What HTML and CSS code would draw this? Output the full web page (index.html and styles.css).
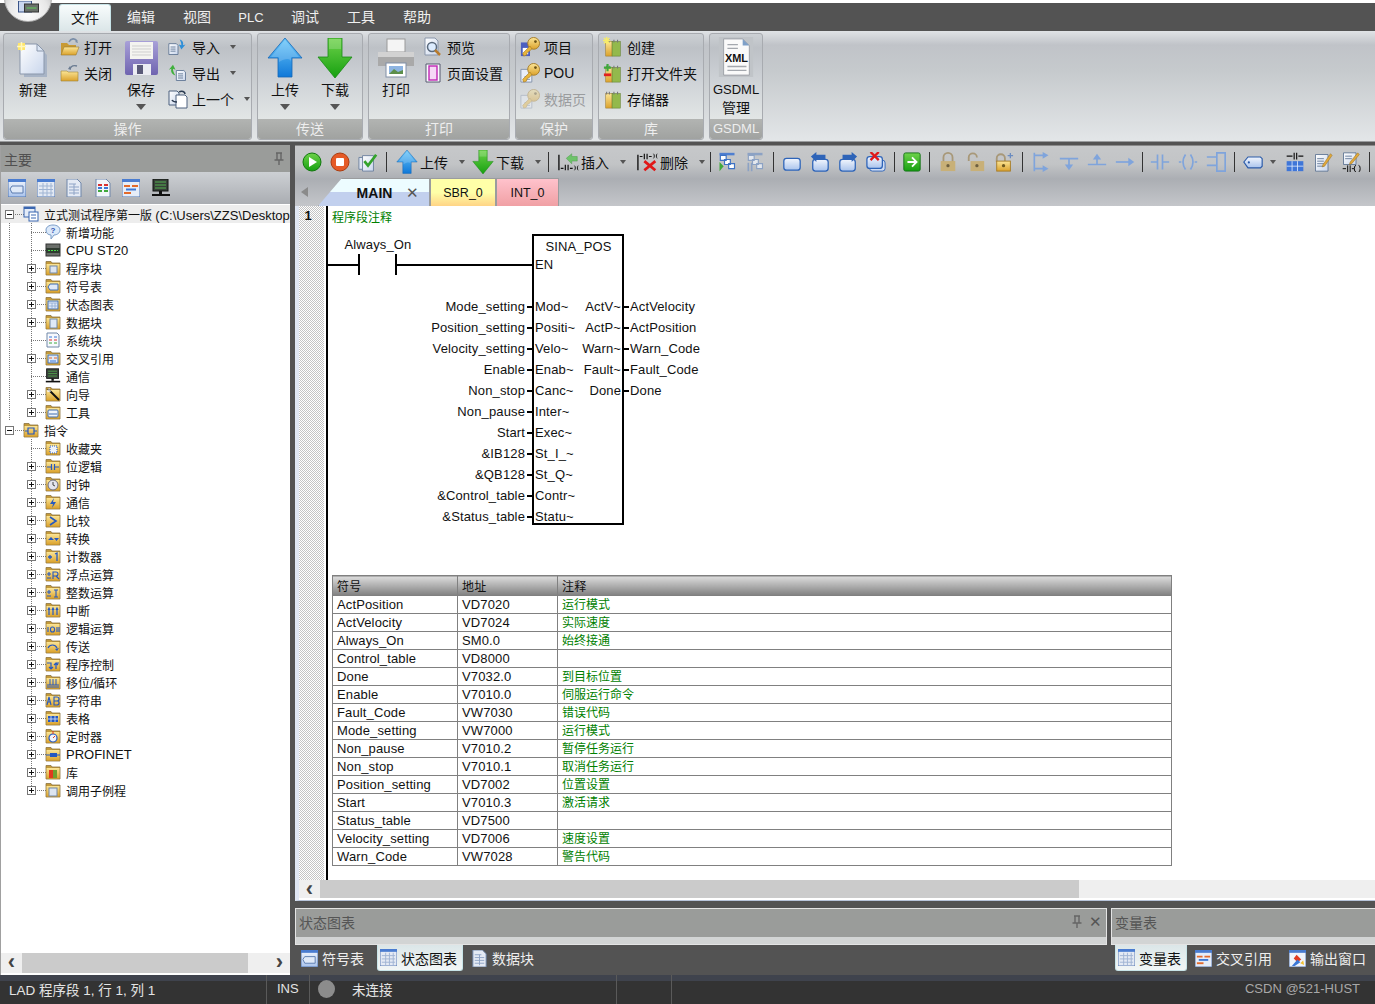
FILE: index.html
```html
<!DOCTYPE html>
<html lang="zh">
<head>
<meta charset="UTF-8">
<title>STEP 7-MicroWIN SMART</title>
<link rel="stylesheet" href="styles.css">
</head>
<body>
<svg class="defs" xmlns="http://www.w3.org/2000/svg">
  <defs>
    <linearGradient id="gBlue" x1="0" y1="0" x2="0" y2="1"><stop offset="0" stop-color="#6cc8fa"/><stop offset="1" stop-color="#0f78d8"/></linearGradient>
    <linearGradient id="gGreen" x1="0" y1="0" x2="0" y2="1"><stop offset="0" stop-color="#6ed24a"/><stop offset="1" stop-color="#16a010"/></linearGradient>
    <linearGradient id="gGold" x1="0" y1="0" x2="0" y2="1"><stop offset="0" stop-color="#fbe596"/><stop offset="1" stop-color="#dba22c"/></linearGradient>
    <linearGradient id="gPage" x1="0" y1="0" x2="1" y2="1"><stop offset="0" stop-color="#ffffff"/><stop offset="1" stop-color="#c9d6ec"/></linearGradient>
    <linearGradient id="gWin" x1="0" y1="0" x2="0" y2="1"><stop offset="0" stop-color="#f2f6fd"/><stop offset="1" stop-color="#a9c3ec"/></linearGradient>
    <linearGradient id="gPurple" x1="0" y1="0" x2="0" y2="1"><stop offset="0" stop-color="#a8a0d8"/><stop offset="1" stop-color="#6f64b0"/></linearGradient>

    <symbol id="fo" viewBox="0 0 16 16"><path d="M1 3V1.500h5L7 3h8v12H1z" fill="#c49a3a" stroke="#8d7440" stroke-width=".8"/><rect x="1.500" y="4" width="13" height="10.500" fill="url(#gGold)"/></symbol>
    <symbol id="new" viewBox="0 0 32 36"><path d="M7 6h16l7 7v22H7z" fill="#a8b4c6"/><path d="M3 2h17l7 7v23H3z" fill="url(#gPage)" stroke="#8a97ab"/><path d="M20 2v7h7z" fill="#dbe5f4" stroke="#8a97ab"/><path d="M1 1h7v7H1z" fill="#ffe66a"/><path d="M4.500 0v9M0 4.500h9" stroke="#fff8c0" stroke-width="1.500"/></symbol>
    <symbol id="open" viewBox="0 0 20 20"><path d="M1 6h6l2 2h7v10H1z" fill="#c89a34"/><path d="M1 18l3-8h15l-3 8z" fill="url(#gGold)" stroke="#9a7a30" stroke-width=".6"/><path d="M9 5c2-4 6-4 8-1" fill="none" stroke="#7a8ea8" stroke-width="1.600"/><path d="M18 6l-3-1 2-2z" fill="#7a8ea8"/></symbol>
    <symbol id="close" viewBox="0 0 20 20"><path d="M1 8h6l1 1h10v9H1z" fill="url(#gGold)" stroke="#a08436" stroke-width=".6"/><path d="M10 6c1-3 4-4 7-3" fill="none" stroke="#6b7c92" stroke-width="1.400"/><path d="M11 7l-3-1 2-3z" fill="#6b7c92"/></symbol>
    <symbol id="save" viewBox="0 0 33 34"><rect x="0" y="0" width="33" height="34" rx="2" fill="url(#gPurple)"/><rect x="5" y="1" width="23" height="17" fill="#f4f4f0"/><path d="M7 5h19M7 8h19M7 11h19M7 14h19" stroke="#cfcfcf"/><rect x="8" y="23" width="18" height="11" fill="#ecedf3"/><rect x="12" y="24" width="6" height="9" fill="#5a5a78"/></symbol>
    <symbol id="imp" viewBox="0 0 24 20"><path d="M1 6h9l2 2v11H1z" fill="url(#gPage)" stroke="#59708f"/><path d="M3 10h6M3 12.500h6M3 15h6" stroke="#59708f"/><path d="M14 1c3 1 5 3 4 7l3-1-5 6-3-6 3 1c0-3-1-5-2-7z" fill="#2e8fd8"/></symbol>
    <symbol id="exp" viewBox="0 0 24 20"><path d="M10 7h9l2 2v10H10z" fill="url(#gPage)" stroke="#59708f"/><path d="M12 11h6M12 13.500h6M12 16h6" stroke="#59708f"/><path d="M9 13C5 12 3 9 4 5L1 6l5-6 3 6-3-1c0 3 1 5 3 8z" fill="#3fb03c"/></symbol>
    <symbol id="prev" viewBox="0 0 20 20"><path d="M1 2h8l2 2v12H1z" fill="url(#gPage)" stroke="#4d617e"/><path d="M8 6h9l2 2v11H8z" fill="#fff" stroke="#4d617e"/><path d="M11 3c3-2 6 0 6 2M9 13c-2 0-4 0-5-2" fill="none" stroke="#29394f" stroke-width="1.500"/></symbol>
    <symbol id="aup" viewBox="0 0 34 40"><path d="M17 0l17 20H24v19H10V20H0z" fill="url(#gBlue)" stroke="#1467b8" stroke-width=".8"/><path d="M17 2L3 19h8v5c6-4 12-4 12 0v-5h8z" fill="#fff" opacity=".18"/></symbol>
    <symbol id="adn" viewBox="0 0 34 40"><path d="M10 0h14v19h10L17 40 0 19h10z" fill="url(#gGreen)" stroke="#188a14" stroke-width=".8"/><path d="M11 1h12v10H11z" fill="#fff" opacity=".18"/></symbol>
    <symbol id="print" viewBox="0 0 36 38"><rect x="9" y="0" width="18" height="13" fill="#f4f4f4" stroke="#9a9a9a"/><path d="M0 13h36v14H0z" fill="#a9a9a9"/><path d="M0 13h36v5H0z" fill="#d2d2d2"/><rect x="8" y="24" width="20" height="14" fill="#fff" stroke="#8090a8"/><rect x="11" y="27" width="14" height="8" fill="#8db4e2"/><path d="M11 35l5-5 4 3 5-2v4z" fill="#5d8f4b"/></symbol>
    <symbol id="pview" viewBox="0 0 20 20"><path d="M2 1h10l3 3v14H2z" fill="url(#gPage)" stroke="#8a97ab"/><circle cx="9" cy="10" r="4.500" fill="#dcecff" stroke="#5a6a7d" stroke-width="1.500"/><path d="M12 13l5 5" stroke="#b77b2e" stroke-width="2.500"/></symbol>
    <symbol id="page" viewBox="0 0 20 20"><path d="M3 1h14v18H3z" fill="#fbfbff" stroke="#55586e"/><rect x="6" y="3" width="8" height="14" fill="#f6d9f6" stroke="#c026b4" stroke-width="1.400"/></symbol>
    <symbol id="key" viewBox="0 0 22 22"><path d="M1 6h10v15H1z" fill="#4c5fc0"/><path d="M3 12h6v7H3z" fill="#fff"/><circle cx="15" cy="7" r="6.500" fill="url(#gGold)" stroke="#a57a24"/><circle cx="17" cy="5" r="1.500" fill="#6b5214"/><path d="M11 10l-8 8 1 3 3-1 1-3 2-1 3-3z" fill="#e8b53c" stroke="#a57a24" stroke-width=".7"/></symbol>
    <symbol id="keyp" viewBox="0 0 22 22"><path d="M1 7h12v14H1z" fill="#e9eef8" stroke="#8090a8"/><path d="M5 15h6M5 18h6" stroke="#8090a8"/><circle cx="15" cy="7" r="6.500" fill="url(#gGold)" stroke="#a57a24"/><circle cx="17" cy="5" r="1.500" fill="#6b5214"/><path d="M11 10l-8 8 1 3 3-1 1-3 2-1 3-3z" fill="#e8b53c" stroke="#a57a24" stroke-width=".7"/></symbol>
    <symbol id="lib" viewBox="0 0 22 22"><rect x="3" y="5" width="7" height="16" fill="url(#gGold)" stroke="#9a7a30" stroke-width=".6"/><rect x="10" y="5" width="9" height="16" fill="#93b94c" stroke="#627f2c" stroke-width=".6"/><path d="M4 3v3M7 3v3M12 3v3M16 3v3" stroke="#777" stroke-width="1.200"/></symbol>
    <symbol id="star" viewBox="0 0 22 22"><path d="M4 0v8M0 4h8M1 1l6 6M7 1L1 7" stroke="#f7ec6a" stroke-width="1.500"/></symbol>
    <symbol id="xml" viewBox="0 0 36 42"><rect x="0" y="0" width="36" height="42" fill="#c0c4c8"/><path d="M5 2h20l7 7v31H5z" fill="#fafafa" stroke="#9ca0a6"/><path d="M25 2v7h7z" fill="#7ea0c8"/><path d="M9 8h11M9 12h11M9 31h20M9 35h20" stroke="#a4a8ae" stroke-width="1.400"/><text x="18.500" y="26" text-anchor="middle" class="xml-text">XML</text></symbol>

    <symbol id="play" viewBox="0 0 20 20"><circle cx="10" cy="10" r="9" fill="url(#gGreen)" stroke="#11780e"/><path d="M7 5l8 5-8 5z" fill="#fff"/></symbol>
    <symbol id="stop" viewBox="0 0 20 20"><circle cx="10" cy="10" r="9" fill="#e55a26" stroke="#ab3c10"/><rect x="6" y="6" width="8" height="8" rx="1" fill="#fff"/></symbol>
    <symbol id="chk" viewBox="0 0 22 22"><path d="M1 6h8v13H1z" fill="#dfe6f2" stroke="#6a7f9e"/><path d="M5 4h12v17H5z" fill="url(#gPage)" stroke="#6a7f9e"/><path d="M7 10l4 5 9-12" fill="none" stroke="#34a32c" stroke-width="3"/></symbol>
    <symbol id="ins" viewBox="0 0 24 20"><path d="M1 2v17" stroke="#111" stroke-width="1.500"/><path d="M3 17h3M8 13v6M11 13v6M13 17h3" stroke="#111" stroke-width="1.300"/><path d="M18 14a2 3 0 0 1 0 5M22 14a2 3 0 0 0 0 5" stroke="#111" fill="none"/><path d="M9 6l6-5v3h6v5h-6v3z" fill="#6ec36a" stroke="#4a9a48" stroke-width=".5"/></symbol>
    <symbol id="del" viewBox="0 0 24 20"><path d="M1 2v17" stroke="#111" stroke-width="1.500"/><path d="M3 4h3M8 1v6M11 1v6M13 4h3" stroke="#111" stroke-width="1.300"/><path d="M18 1a2 3 0 0 1 0 5M22 1a2 3 0 0 0 0 5" stroke="#111" fill="none"/><path d="M8 9l12 10M20 9L8 19" stroke="#e01818" stroke-width="3"/></symbol>
    <symbol id="nest" viewBox="0 0 20 24"><rect x="1" y="1" width="18" height="3" fill="#4f7fd0"/><path d="M2 4h7v6H2zM7 9h7v6H7zM12 14h7v6h-7z" fill="#fff" stroke="#3d72c4" stroke-width="1.400"/><path d="M1 12l5 5-5 6z" fill="#41a83a"/></symbol>
    <symbol id="nest2" viewBox="0 0 20 24"><rect x="1" y="1" width="18" height="3" fill="#8ca2c4"/><path d="M2 4h7v6H2zM7 9h7v6H7zM12 14h7v6h-7z" fill="#e4e8ee" stroke="#8ca2c4" stroke-width="1.400"/><path d="M1 13h2v10H1zM5 13h2v10H5z" fill="#8ca2c4"/></symbol>
    <symbol id="rc" viewBox="0 0 22 22"><rect x="2" y="7" width="18" height="13" rx="3" fill="url(#gWin)" stroke="#2e64b8" stroke-width="1.400"/></symbol>
    <symbol id="rcl" viewBox="0 0 22 22"><rect x="3" y="8" width="17" height="13" rx="3" fill="url(#gWin)" stroke="#2e64b8" stroke-width="1.400"/><path d="M1 5l6-5v3h10v5H7v3z" fill="#2e64b8"/></symbol>
    <symbol id="rcr" viewBox="0 0 22 22"><rect x="2" y="8" width="17" height="13" rx="3" fill="url(#gWin)" stroke="#2e64b8" stroke-width="1.400"/><path d="M21 5l-6-5v3H5v5h10v3z" fill="#2e64b8"/></symbol>
    <symbol id="rcx" viewBox="0 0 22 22"><rect x="4" y="9" width="17" height="12" rx="3" fill="#cfdcf2" stroke="#2e64b8"/><rect x="1" y="5" width="17" height="13" rx="3" fill="url(#gWin)" stroke="#2e64b8" stroke-width="1.400"/><path d="M5 0l9 9M14 0L5 9" stroke="#e01818" stroke-width="2.600"/></symbol>
    <symbol id="go" viewBox="0 0 20 22"><rect x="1" y="1" width="18" height="20" rx="2" fill="url(#gGreen)" stroke="#0e6f12"/><path d="M5 11h9M10 6l5 5-5 5" fill="none" stroke="#fff" stroke-width="2"/></symbol>
    <symbol id="lock" viewBox="0 0 20 22"><path d="M5 11V6a5 5 0 0 1 10 0v5" fill="none" stroke="#a89878" stroke-width="2"/><rect x="2" y="10" width="16" height="11" fill="#c8b078"/><circle cx="10" cy="15" r="1.800" fill="#6e6040"/></symbol>
    <symbol id="ulock" viewBox="0 0 20 22"><path d="M2 10V6a4.500 4.500 0 0 1 9 0" fill="none" stroke="#a89878" stroke-width="2"/><rect x="4" y="10" width="15" height="11" fill="#c8b078"/><circle cx="11" cy="15" r="1.800" fill="#6e6040"/></symbol>
    <symbol id="plock" viewBox="0 0 22 22"><path d="M3 11V7a4.500 4.500 0 0 1 9 0v4" fill="none" stroke="#a89878" stroke-width="2"/><rect x="3" y="10" width="15" height="11" fill="url(#gGold)" stroke="#a57a24"/><circle cx="10.500" cy="15" r="1.800" fill="#6e5a20"/><path d="M18 1v6M15 4h6" stroke="#6b8cc0" stroke-width="1.400"/></symbol>
    <symbol id="f1" viewBox="0 0 24 24"><path d="M4 1v22M4 4h12M4 20h12" stroke="#7fa4dc" stroke-width="2" fill="none"/><path d="M14 0l7 4-7 4zM14 16l7 4-7 4z" fill="#7fa4dc"/></symbol>
    <symbol id="f2" viewBox="0 0 24 24"><path d="M1 8h22M12 8v8" stroke="#7fa4dc" stroke-width="2"/><path d="M7 15h10l-5 7z" fill="#7fa4dc"/></symbol>
    <symbol id="f3" viewBox="0 0 24 24"><path d="M1 15h22M12 15V8" stroke="#7fa4dc" stroke-width="2"/><path d="M7 9h10l-5-7z" fill="#7fa4dc"/></symbol>
    <symbol id="f4" viewBox="0 0 24 24"><path d="M1 12h16" stroke="#7fa4dc" stroke-width="2"/><path d="M16 7l7 5-7 5z" fill="#7fa4dc"/></symbol>
    <symbol id="f5" viewBox="0 0 24 24"><path d="M1 12h7M16 12h7M9 3v18M15 3v18" stroke="#7fa4dc" stroke-width="2"/></symbol>
    <symbol id="f6" viewBox="0 0 24 24"><path d="M1 12h3M20 12h3M9 3Q3 12 9 21M15 3q6 9 0 18" stroke="#7fa4dc" stroke-width="2" fill="none"/></symbol>
    <symbol id="f7" viewBox="0 0 24 24"><path d="M1 6h12M1 16h12M13 1h10v22H13z" stroke="#7fa4dc" stroke-width="2" fill="none"/></symbol>
    <symbol id="tag" viewBox="0 0 24 20"><path d="M1 10l5-6h15l2 2v9l-2 2H6z" fill="url(#gWin)" stroke="#2a5aa8" stroke-width="1.400"/><circle cx="7" cy="10.500" r="1.300" fill="#2a5aa8"/></symbol>
    <symbol id="tblc" viewBox="0 0 22 24"><path d="M1 5h7M10 1v8M13 1v8M15 5h6" stroke="#111" stroke-width="1.400"/><rect x="1" y="11" width="20" height="12" fill="#3f76d8"/><path d="M1 17h20M7.500 11v12M14 11v12" stroke="#dce8fb"/></symbol>
    <symbol id="note" viewBox="0 0 22 24"><path d="M2 3h15v20H2z" fill="url(#gPage)" stroke="#59708f"/><path d="M4 8h8M4 11h8M4 14h8M4 17h8" stroke="#59708f"/><path d="M11 15L20 2l2 2-9 13-3 1z" fill="#e0a83a" stroke="#8a6418" stroke-width=".5"/></symbol>
    <symbol id="notel" viewBox="0 0 22 24"><path d="M2 1h15v14H2z" fill="url(#gPage)" stroke="#59708f"/><path d="M4 5h8M4 8h8" stroke="#59708f"/><path d="M10 12L19 1l2 2-9 11-3 1z" fill="#e0a83a" stroke="#8a6418" stroke-width=".5"/><path d="M1 20h4M7 16v8M10 16v8M12 20h3M17 16a2 4 0 0 0 0 8M20 16a2 4 0 0 1 0 8" stroke="#111" stroke-width="1.200" fill="none"/></symbol>
    <symbol id="tpin" viewBox="0 0 12 14"><path d="M3 1h6M4 1v7M8 1v7M1.500 8h9M6 8v5" stroke="#656565" stroke-width="1.400" fill="none"/></symbol>

    <symbol id="wtag" viewBox="0 0 18 18"><rect width="18" height="18" fill="url(#gWin)" stroke="#4f74b0"/><rect width="18" height="3" fill="#4a7cd0"/><path d="M2 10l2-3h11v7H4z" fill="#dfe9f8" stroke="#5a7baf"/></symbol>
    <symbol id="wgrid" viewBox="0 0 18 18"><rect width="18" height="18" fill="#e4eaf4" stroke="#4f74b0"/><rect width="18" height="3" fill="#4a7cd0"/><path d="M2 7h14M2 10.500h14M2 14h14M6 4v13M10 4v13M14 4v13" stroke="#9fb4d3"/></symbol>
    <symbol id="wdoc" viewBox="0 0 18 18"><path d="M2 0h10l4 4v14H2z" fill="#e4eaf4" stroke="#6f86aa"/><path d="M4 5h7M4 8h10M4 11h10M4 14h10M9 5v11" stroke="#8fa4c6"/></symbol>
    <symbol id="wcol" viewBox="0 0 18 18"><path d="M2 0h10l4 4v14H2z" fill="#f2f5fa" stroke="#6f86aa"/><path d="M4 6h4M10 6h4" stroke="#d83030" stroke-width="2"/><path d="M4 9h4M10 9h4" stroke="#3b78d8" stroke-width="2"/><path d="M4 12h4M10 12h4" stroke="#3fa83c" stroke-width="2"/></symbol>
    <symbol id="wxref" viewBox="0 0 18 18"><rect width="18" height="18" fill="#e6edf8" stroke="#4f74b0"/><rect width="18" height="3" fill="#4a7cd0"/><path d="M2 7h6M10 7h6" stroke="#e26a2c" stroke-width="2"/><path d="M4 10.500h10" stroke="#3b78d8" stroke-width="2"/><path d="M2 14h7" stroke="#e26a2c" stroke-width="2"/></symbol>
    <symbol id="mon" viewBox="0 0 20 18"><rect x="2" y="0" width="15" height="12" fill="#374038" stroke="#111"/><path d="M4 3h11M4 6h11M4 9h11" stroke="#55b050"/><rect x="8" y="12" width="3" height="3" fill="#111"/><rect x="1" y="15" width="18" height="2" fill="#111"/></symbol>
    <symbol id="cpu" viewBox="0 0 16 16"><rect x="1" y="2" width="14" height="12" fill="#6a6e6a" stroke="#333"/><rect x="1" y="6" width="14" height="5" fill="#2e3a30"/><path d="M3 8.500h10" stroke="#48e048" stroke-dasharray="2 1"/></symbol>
    <symbol id="bub" viewBox="0 0 16 16"><path d="M8 1c4 0 7 2 7 5s-3 5-6 5l-3 4v-4C3 11 1 9 1 6c0-3 3-5 7-5z" fill="#dbe9fa" stroke="#7a9cc8"/><text x="8" y="9" text-anchor="middle" class="bub-text">?</text></symbol>
    <symbol id="sysb" viewBox="0 0 16 16"><path d="M2 1h10l2 2v12H2z" fill="#f7f9fd" stroke="#7088a8"/><path d="M4 5h3M9 5h3" stroke="#3b78d8"/><path d="M4 8h3M9 8h3" stroke="#d83030"/><path d="M4 11h3M9 11h3" stroke="#3fa83c"/></symbol>
    <symbol id="out" viewBox="0 0 18 18"><rect width="18" height="18" fill="#f0f4fb" stroke="#4f74b0"/><rect width="18" height="3" fill="#4a7cd0"/><path d="M8 5l5 5-4 3-4-4z" fill="#e03a20"/><path d="M3 17l6-7 3 3-6 4z" fill="#3b78d8"/><path d="M12 14l3-3 1 5z" fill="#f0c030"/></symbol>
  </defs>
</svg>

<div class="top-strip"></div>
<div class="orb"><svg class="orb-ico" viewBox="0 0 22 12"><rect x="1" y="0" width="13" height="11" fill="#c9d6ee" stroke="#3a5488"/><rect x="7" y="3" width="14" height="8" fill="#6a706a" stroke="#333"/><path d="M9 7h10" stroke="#5fd05a"/></svg></div>

<nav class="menu">
  <a class="menu-tab">文件</a>
  <a class="menu-tab">编辑</a>
  <a class="menu-tab">视图</a>
  <a class="menu-tab">PLC</a>
  <a class="menu-tab">调试</a>
  <a class="menu-tab">工具</a>
  <a class="menu-tab">帮助</a>
</nav>

<section class="ribbon">
  <div class="group g-ops">
    <div class="g-body">
      <div class="big"><span class="big-ico"><svg class="i-new"><use href="#new"/></svg></span><span>新建</span></div>
      <div class="col c-54">
        <div class="small"><svg><use href="#open"/></svg>打开</div>
        <div class="small"><svg><use href="#close"/></svg>关闭</div>
      </div>
      <div class="big"><span class="big-ico"><svg class="i-save"><use href="#save"/></svg></span><span>保存</span><i class="caret"></i></div>
      <div class="col">
        <div class="small"><svg><use href="#imp"/></svg>导入<i class="caret-s"></i></div>
        <div class="small"><svg><use href="#exp"/></svg>导出<i class="caret-s"></i></div>
        <div class="small"><svg><use href="#prev"/></svg>上一个<i class="caret-s"></i></div>
      </div>
    </div>
    <div class="g-foot">操作</div>
  </div>
  <div class="group g-trans">
    <div class="g-body">
      <div class="big"><span class="big-ico"><svg class="i-arrow"><use href="#aup"/></svg></span><span>上传</span><i class="caret"></i></div>
      <div class="big"><span class="big-ico"><svg class="i-arrow"><use href="#adn"/></svg></span><span>下载</span><i class="caret"></i></div>
    </div>
    <div class="g-foot">传送</div>
  </div>
  <div class="group g-print">
    <div class="g-body">
      <div class="big"><span class="big-ico"><svg class="i-arrow"><use href="#print"/></svg></span><span>打印</span></div>
      <div class="col">
        <div class="small"><svg><use href="#pview"/></svg>预览</div>
        <div class="small"><svg><use href="#page"/></svg>页面设置</div>
      </div>
    </div>
    <div class="g-foot">打印</div>
  </div>
  <div class="group g-prot">
    <div class="g-body">
      <div class="col">
        <div class="small"><svg><use href="#key"/></svg>项目</div>
        <div class="small"><svg><use href="#keyp"/></svg>POU</div>
        <div class="small off"><svg><use href="#keyp"/></svg>数据页</div>
      </div>
    </div>
    <div class="g-foot">保护</div>
  </div>
  <div class="group g-lib">
    <div class="g-body">
      <div class="col">
        <div class="small"><svg viewBox="0 0 22 22"><use href="#lib"/><use href="#star"/></svg>创建</div>
        <div class="small"><svg viewBox="0 0 22 22"><use href="#lib"/><path d="M1 5h8M5 1v8" stroke="#3fa83c" stroke-width="2.400"/><path d="M1 13h8" stroke="#e02020" stroke-width="3"/></svg>打开文件夹</div>
        <div class="small"><svg><use href="#lib"/></svg>存储器</div>
      </div>
    </div>
    <div class="g-foot">库</div>
  </div>
  <div class="group g-gsd">
    <div class="g-body">
      <div class="big big-gsd"><span class="big-ico"><svg class="i-arrow"><use href="#xml"/></svg></span><span class="lat-gsd">GSDML</span><span>管理</span></div>
    </div>
    <div class="g-foot lat-gsd">GSDML</div>
  </div>
</section>

<main class="main">
  <aside class="left">
    <div class="pane-head"><span>主要</span><svg class="pin"><use href="#tpin"/></svg></div>
    <div class="pane-icons">
      <svg><use href="#wtag"/></svg>
      <svg><use href="#wgrid"/></svg>
      <svg><use href="#wdoc"/></svg>
      <svg><use href="#wcol"/></svg>
      <svg><use href="#wxref"/></svg>
      <svg class="wide"><use href="#mon"/></svg>
    </div>
    <div class="tree">
      <div class="node root sel"><i class="exp minus"></i><svg class="ico" viewBox="0 0 16 16"><rect x="1" y="1" width="11" height="10" fill="#e4ecf8" stroke="#3a66b0"/><rect x="1" y="1" width="11" height="2" fill="#3a66b0"/><rect x="6" y="6" width="9" height="9" fill="#fff" stroke="#3a66b0"/><path d="M8 9h5M8 12h5" stroke="#3a66b0"/></svg><span class="nowrap">立式测试程序第一版 <span class="lat">(C:\Users\ZZS\Desktop</span></span></div>
      <div class="kids kids-root">
        <div class="node"><i class="exp none"></i><svg class="ico"><use href="#bub"/></svg><span>新增功能</span></div>
        <div class="node"><i class="exp none"></i><svg class="ico"><use href="#cpu"/></svg><span class="lat">CPU ST20</span></div>
        <div class="node"><i class="exp"></i><svg class="ico" viewBox="0 0 16 16"><use href="#fo"/><rect x="5" y="6" width="7" height="7" fill="#dde5f0" stroke="#7088a8"/></svg><span>程序块</span></div>
        <div class="node"><i class="exp"></i><svg class="ico" viewBox="0 0 16 16"><use href="#fo"/><path d="M3 9l2-3h8v6H5z" fill="#dfe9f8" stroke="#3f6cb0"/></svg><span>符号表</span></div>
        <div class="node"><i class="exp"></i><svg class="ico" viewBox="0 0 16 16"><use href="#fo"/><rect x="3" y="5" width="10" height="8" fill="#dfe9f8" stroke="#3f6cb0"/><path d="M3 7h10M3 10h10M7 7v6M10 7v6" stroke="#8ea8d0" stroke-width=".8"/></svg><span>状态图表</span></div>
        <div class="node"><i class="exp"></i><svg class="ico" viewBox="0 0 16 16"><use href="#fo"/><rect x="5" y="5" width="7" height="9" fill="#dfe9f8" stroke="#7088a8"/></svg><span>数据块</span></div>
        <div class="node"><i class="exp none"></i><svg class="ico"><use href="#sysb"/></svg><span>系统块</span></div>
        <div class="node"><i class="exp"></i><svg class="ico" viewBox="0 0 16 16"><use href="#fo"/><rect x="3" y="5" width="10" height="8" fill="#dfe9f8" stroke="#3f6cb0"/><path d="M4 8h3M9 8h3" stroke="#e26a2c"/><path d="M5 11h6" stroke="#3b78d8"/></svg><span>交叉引用</span></div>
        <div class="node"><i class="exp none"></i><svg class="ico"><use href="#mon"/></svg><span>通信</span></div>
        <div class="node"><i class="exp"></i><svg class="ico" viewBox="0 0 16 16"><use href="#fo"/><path d="M3 3l11 11" stroke="#111" stroke-width="2"/><path d="M2 5h4M4 2v4" stroke="#fff"/></svg><span>向导</span></div>
        <div class="node"><i class="exp"></i><svg class="ico" viewBox="0 0 16 16"><use href="#fo"/><rect x="3" y="6" width="10" height="7" rx="1" fill="#f0f4fa" stroke="#3f6cb0"/><path d="M4 10h8" stroke="#3f6cb0"/></svg><span>工具</span></div>
      </div>
      <div class="node root"><i class="exp minus"></i><svg class="ico" viewBox="0 0 16 16"><use href="#fo"/><path d="M2 9h3M11 9h3M5 6h6v6H5z" fill="none" stroke="#2558c0" stroke-width="1.200"/></svg><span>指令</span></div>
      <div class="kids">
        <div class="node"><i class="exp none"></i><svg class="ico" viewBox="0 0 16 16"><use href="#fo"/><rect x="5" y="6" width="7" height="7" fill="#f0f4fa" stroke="#2558c0" stroke-dasharray="1 1"/></svg><span>收藏夹</span></div>
        <div class="node"><i class="exp"></i><svg class="ico" viewBox="0 0 16 16"><use href="#fo"/><path d="M2 9h4M10 9h4M6.500 6v6M9.500 6v6" stroke="#2558c0" stroke-width="1.200"/></svg><span>位逻辑</span></div>
        <div class="node"><i class="exp"></i><svg class="ico" viewBox="0 0 16 16"><use href="#fo"/><circle cx="8" cy="9" r="5" fill="#e4e4ee" stroke="#6a6a7a"/><path d="M8 6v3l2 1" stroke="#444" fill="none"/></svg><span>时钟</span></div>
        <div class="node"><i class="exp"></i><svg class="ico" viewBox="0 0 16 16"><use href="#fo"/><path d="M9 4l-4 6h3l-1 4 4-6H8z" fill="#2558c0"/></svg><span>通信</span></div>
        <div class="node"><i class="exp"></i><svg class="ico" viewBox="0 0 16 16"><use href="#fo"/><path d="M5 5l6 4-6 4" fill="none" stroke="#2558c0" stroke-width="1.600"/></svg><span>比较</span></div>
        <div class="node"><i class="exp"></i><svg class="ico" viewBox="0 0 16 16"><use href="#fo"/><path d="M3 10l3-3 3 3zM9 8h5l-2.500 3z" fill="#2558c0"/></svg><span>转换</span></div>
        <div class="node"><i class="exp"></i><svg class="ico" viewBox="0 0 16 16"><use href="#fo"/><path d="M3 9h4M5 7v4M10 6l2-1v8" fill="none" stroke="#2558c0" stroke-width="1.300"/></svg><span>计数器</span></div>
        <div class="node"><i class="exp"></i><svg class="ico" viewBox="0 0 16 16"><use href="#fo"/><path d="M2 8h4M4 6v4M2 12h4M8 13V6h3a2 2 0 0 1 0 4H8M11 10l3 3" fill="none" stroke="#2558c0" stroke-width="1.100"/></svg><span>浮点运算</span></div>
        <div class="node"><i class="exp"></i><svg class="ico" viewBox="0 0 16 16"><use href="#fo"/><path d="M2 8h4M4 6v4M2 12h4M9 6h4M11 6v7M9 13h4" fill="none" stroke="#2558c0" stroke-width="1.100"/></svg><span>整数运算</span></div>
        <div class="node"><i class="exp"></i><svg class="ico" viewBox="0 0 16 16"><use href="#fo"/><path d="M4 13V7M8 13V7M12 13V7M3 8l1-2 1 2M7 8l1-2 1 2M11 8l1-2 1 2" stroke="#2558c0" stroke-width="1.200" fill="none"/></svg><span>中断</span></div>
        <div class="node"><i class="exp"></i><svg class="ico" viewBox="0 0 16 16"><use href="#fo"/><path d="M3 7v5M12 7v5M14 7v5" stroke="#2558c0" stroke-width="1.100"/><rect x="5.500" y="7" width="4" height="5" rx="2" fill="none" stroke="#2558c0" stroke-width="1.100"/></svg><span>逻辑运算</span></div>
        <div class="node"><i class="exp"></i><svg class="ico" viewBox="0 0 16 16"><use href="#fo"/><path d="M3 10c2-4 7-4 9 0" fill="none" stroke="#2558c0" stroke-width="1.200"/><path d="M14 10l-4 1 2 2z" fill="#2558c0"/></svg><span>传送</span></div>
        <div class="node"><i class="exp"></i><svg class="ico" viewBox="0 0 16 16"><use href="#fo"/><path d="M2 7h4v6M11 13V7h3M4 11l2 2 2-2M9 9l2-2 2 2" fill="none" stroke="#2558c0" stroke-width="1.200"/></svg><span>程序控制</span></div>
        <div class="node"><i class="exp"></i><svg class="ico" viewBox="0 0 16 16"><use href="#fo"/><path d="M2 11h12M2 13h12M5 5v6M8 5v6M11 5v6" stroke="#2558c0"/></svg><span>移位/循环</span></div>
        <div class="node"><i class="exp"></i><svg class="ico" viewBox="0 0 16 16"><use href="#fo"/><path d="M2 13l2-8 2 8M3 10h2M9 5v8h3a2 2 0 0 0 0-4H9h3a2 2 0 0 0 0-4z" fill="none" stroke="#2558c0" stroke-width="1.100"/></svg><span>字符串</span></div>
        <div class="node"><i class="exp"></i><svg class="ico" viewBox="0 0 16 16"><use href="#fo"/><rect x="3" y="6" width="10" height="6" fill="#2558c0"/><path d="M3 9h10M6 6v6M10 6v6" stroke="#dce8fb" stroke-width=".8"/></svg><span>表格</span></div>
        <div class="node"><i class="exp"></i><svg class="ico" viewBox="0 0 16 16"><use href="#fo"/><circle cx="8" cy="10" r="4" fill="#f0f4fa" stroke="#2558c0" stroke-width="1.200"/><path d="M8 3v3M8 10l2-2" stroke="#e03a20"/></svg><span>定时器</span></div>
        <div class="node"><i class="exp"></i><svg class="ico" viewBox="0 0 16 16"><use href="#fo"/><path d="M1 9h14" stroke="#2558c0"/><rect x="5" y="7" width="7" height="4" fill="#2558c0"/></svg><span class="lat">PROFINET</span></div>
        <div class="node"><i class="exp"></i><svg class="ico" viewBox="0 0 16 16"><use href="#fo"/><rect x="4" y="6" width="4" height="8" fill="#e03a20"/><rect x="8" y="6" width="4" height="8" fill="#6ea030"/></svg><span>库</span></div>
        <div class="node"><i class="exp"></i><svg class="ico" viewBox="0 0 16 16"><use href="#fo"/><rect x="4" y="6" width="8" height="8" fill="#dde5f0" stroke="#7088a8"/></svg><span>调用子例程</span></div>
      </div>
    </div>
    <div class="hbar hbar-left">
      <span class="hbtn">‹</span><span class="thumb"></span><span class="track"></span><span class="hbtn">›</span>
    </div>
  </aside>

  <div class="right">
    <div class="tool-area">
      <div class="toolbar">
        <span class="tb"><svg><use href="#play"/></svg></span>
        <span class="tb"><svg><use href="#stop"/></svg></span>
        <span class="tb"><svg><use href="#chk"/></svg></span>
        <i class="sep"></i>
        <span class="tb-text"><svg><use href="#aup"/></svg>上传<i class="caret-s"></i></span>
        <span class="tb-text"><svg><use href="#adn"/></svg>下载<i class="caret-s"></i></span>
        <i class="sep"></i>
        <span class="tb-text tb-lad"><svg><use href="#ins"/></svg>插入<i class="caret-s"></i></span>
        <span class="tb-text tb-lad"><svg><use href="#del"/></svg>删除<i class="caret-s"></i></span>
        <i class="sep"></i>
        <span class="tb"><svg><use href="#nest"/></svg></span>
        <span class="tb"><svg><use href="#nest2"/></svg></span>
        <i class="sep"></i>
        <span class="tb"><svg><use href="#rc"/></svg></span>
        <span class="tb"><svg><use href="#rcl"/></svg></span>
        <span class="tb"><svg><use href="#rcr"/></svg></span>
        <span class="tb"><svg><use href="#rcx"/></svg></span>
        <i class="sep"></i>
        <span class="tb tb-go"><svg><use href="#go"/></svg></span>
        <i class="sep"></i>
        <span class="tb"><svg><use href="#lock"/></svg></span>
        <span class="tb"><svg><use href="#ulock"/></svg></span>
        <span class="tb"><svg><use href="#plock"/></svg></span>
        <i class="sep"></i>
        <span class="tb"><svg><use href="#f1"/></svg></span>
        <span class="tb"><svg><use href="#f2"/></svg></span>
        <span class="tb"><svg><use href="#f3"/></svg></span>
        <span class="tb"><svg><use href="#f4"/></svg></span>
        <i class="sep sep-n"></i>
        <span class="tb"><svg><use href="#f5"/></svg></span>
        <span class="tb"><svg><use href="#f6"/></svg></span>
        <span class="tb"><svg><use href="#f7"/></svg></span>
        <i class="sep"></i>
        <span class="tb tb-tag"><svg><use href="#tag"/></svg><i class="caret-s"></i></span>
        <span class="tb"><svg><use href="#tblc"/></svg></span>
        <span class="tb"><svg><use href="#note"/></svg></span>
        <span class="tb"><svg><use href="#notel"/></svg></span>
        <i class="sep"></i>
      </div>
      <div class="doc-tabs">
        <i class="doc-back"></i>
        <div class="doc-tab t-main"><b>MAIN</b><span class="doc-x">✕</span></div>
        <div class="doc-tab t-sbr">SBR_0</div>
        <div class="doc-tab t-int">INT_0</div>
      </div>
    </div>

    <div class="editor">
      <div class="code-wrap">
        <div class="gutter"><b>1</b></div>
        <div class="code">
          <div class="net-comment">程序段注释</div>
          <div class="ladder">
            <div class="lad-in">
              <div class="contact-label">Always_On</div>
              <div class="rung"><i class="bar"></i><i class="bar"></i></div>
              <div class="pin-blank"></div>
              <div class="pin-in">Mode_setting</div>
              <div class="pin-in">Position_setting</div>
              <div class="pin-in">Velocity_setting</div>
              <div class="pin-in">Enable</div>
              <div class="pin-in">Non_stop</div>
              <div class="pin-in">Non_pause</div>
              <div class="pin-in">Start</div>
              <div class="pin-in">&amp;IB128</div>
              <div class="pin-in">&amp;QB128</div>
              <div class="pin-in">&amp;Control_table</div>
              <div class="pin-in">&amp;Status_table</div>
            </div>
            <div class="fb">
              <div class="fb-title">SINA_POS</div>
              <div class="fb-row">EN</div>
              <div class="fb-row"></div>
              <div class="fb-row"><span>Mod~</span><span>ActV~</span></div>
              <div class="fb-row"><span>Positi~</span><span>ActP~</span></div>
              <div class="fb-row"><span>Velo~</span><span>Warn~</span></div>
              <div class="fb-row"><span>Enab~</span><span>Fault~</span></div>
              <div class="fb-row"><span>Canc~</span><span>Done</span></div>
              <div class="fb-row">Inter~</div>
              <div class="fb-row">Exec~</div>
              <div class="fb-row">St_I_~</div>
              <div class="fb-row">St_Q~</div>
              <div class="fb-row">Contr~</div>
              <div class="fb-row">Statu~</div>
            </div>
            <div class="lad-out">
              <div class="pin-out">ActVelocity</div>
              <div class="pin-out">ActPosition</div>
              <div class="pin-out">Warn_Code</div>
              <div class="pin-out">Fault_Code</div>
              <div class="pin-out">Done</div>
            </div>
          </div>
          <table class="sym">
            <thead><tr><th>符号</th><th>地址</th><th>注释</th></tr></thead>
            <tbody>
              <tr><td>ActPosition</td><td>VD7020</td><td class="cm">运行模式</td></tr>
              <tr><td>ActVelocity</td><td>VD7024</td><td class="cm">实际速度</td></tr>
              <tr><td>Always_On</td><td>SM0.0</td><td class="cm">始终接通</td></tr>
              <tr><td>Control_table</td><td>VD8000</td><td class="cm"></td></tr>
              <tr><td>Done</td><td>V7032.0</td><td class="cm">到目标位置</td></tr>
              <tr><td>Enable</td><td>V7010.0</td><td class="cm">伺服运行命令</td></tr>
              <tr><td>Fault_Code</td><td>VW7030</td><td class="cm">错误代码</td></tr>
              <tr><td>Mode_setting</td><td>VW7000</td><td class="cm">运行模式</td></tr>
              <tr><td>Non_pause</td><td>V7010.2</td><td class="cm">暂停任务运行</td></tr>
              <tr><td>Non_stop</td><td>V7010.1</td><td class="cm">取消任务运行</td></tr>
              <tr><td>Position_setting</td><td>VD7002</td><td class="cm">位置设置</td></tr>
              <tr><td>Start</td><td>V7010.3</td><td class="cm">激活请求</td></tr>
              <tr><td>Status_table</td><td>VD7500</td><td class="cm"></td></tr>
              <tr><td>Velocity_setting</td><td>VD7006</td><td class="cm">速度设置</td></tr>
              <tr><td>Warn_Code</td><td>VW7028</td><td class="cm">警告代码</td></tr>
            </tbody>
          </table>
        </div>
      </div>
      <div class="hbar hbar-code">
        <span class="hbtn">‹</span><span class="thumb"></span><span class="track"></span>
      </div>
    </div>

    <div class="docks">
      <div class="dock d-left">
        <div class="dock-head"><span>状态图表</span><svg class="pin"><use href="#tpin"/></svg><span class="dock-x">✕</span></div>
      </div>
      <div class="dock d-right">
        <div class="dock-head"><span>变量表</span></div>
      </div>
    </div>

    <div class="bottom-tabs">
      <div class="bt-group">
        <div class="bt"><svg><use href="#wtag"/></svg>符号表</div>
        <div class="bt active"><svg><use href="#wgrid"/></svg>状态图表</div>
        <div class="bt"><svg><use href="#wdoc"/></svg>数据块</div>
      </div>
      <div class="bt-group bt-right">
        <div class="bt active"><svg><use href="#wgrid"/></svg>变量表</div>
        <div class="bt"><svg><use href="#wxref"/></svg>交叉引用</div>
        <div class="bt bt-last"><svg><use href="#out"/></svg>输出窗口</div>
      </div>
    </div>
  </div>
</main>

<footer class="status">
  <span class="st st-pos">LAD 程序段 1, 行 1, 列 1</span>
  <span class="st st-ins">INS</span>
  <span class="st st-conn"><i class="led"></i>未连接</span>
  <span class="st st-e1"></span>
  <span class="st st-e2"></span>
  <span class="st-mark">CSDN @521-HUST</span>
</footer>
</body>
</html>
```

FILE: styles.css
```css
* { box-sizing: border-box; }

html, body {
  margin: 0;
  height: 100%;
}

body {
  width: 1375px;
  height: 1004px;
  overflow: hidden;
  display: flex;
  flex-direction: column;
  position: relative;
  background: #535353;
  font-family: "Liberation Sans", "Noto Sans CJK SC", sans-serif;
  font-size: 14px;
  color: #111;
}

.defs { width: 0; height: 0; display: block; }
.xml-text { font: bold 11.500px "Liberation Sans", sans-serif; fill: #111; }
.bub-text { font: bold 8px "Liberation Sans", sans-serif; fill: #3050b0; }

.top-strip { height: 3px; background: #fff; flex: none; }

.orb {
  position: absolute;
  left: 4px;
  top: -26px;
  width: 48px;
  height: 48px;
  border-radius: 50%;
  border: 1px solid #aaa;
  background: radial-gradient(circle at 50% 80%, #fff 0, #e8e8e8 45%, #9a9a9a 100%);
  z-index: 2;
}
.orb-ico {
  position: absolute;
  left: 12px;
  top: 26px;
  width: 23px;
  height: 12px;
}

/* menu */
.menu {
  height: 28px;
  flex: none;
  display: flex;
  padding: 1px 0 0 59px;
  background: #535353;
}
.menu-tab {
  width: 56px;
  text-align: center;
  line-height: 27px;
  color: #f0f0f0;
}
.menu-tab:nth-child(1) {
  width: 52px;
  margin-right: 2px;
  color: #111;
  border: 1px solid #c8e4e8;
  border-bottom: 0;
  border-radius: 3px 3px 0 0;
  background: linear-gradient(#f8fcfc, #dbe6e8);
}
.menu-tab:nth-child(4) { font-size: 13px; width: 52px; }

/* ribbon */
.ribbon {
  height: 110px;
  flex: none;
  display: flex;
  gap: 5px;
  padding: 2px 0 0 3px;
  background: linear-gradient(#e0e3e6 0, #c0c3c8 14px, #c6cacd 40px, #e3e6e8 100%);
}
.group {
  height: 107px;
  display: flex;
  flex-direction: column;
  border: 1px solid #a8abb0;
  border-radius: 3px;
  background: linear-gradient(#ccd0d4 0, #bdc1c6 14px, #d0d4d8 50px, #e2e6e6 86px);
}
.g-ops { width: 249px; }
.g-trans { width: 106px; }
.g-print { width: 142px; }
.g-prot { width: 78px; }
.g-lib { width: 106px; }
.g-gsd { width: 54px; }

.g-body {
  height: 85px;
  display: flex;
  gap: 6px;
  padding-left: 5px;
}
.g-ops .g-body { padding-left: 7px; gap: 5px; }
.g-print .g-body { gap: 5px; }
.g-prot .g-body, .g-lib .g-body { padding-left: 4px; gap: 0; }
.g-gsd .g-body { padding-left: 0; }

.g-foot {
  flex: 1;
  background: linear-gradient(#b2b4b2, #a0a2a0);
  color: #eee;
  text-align: center;
  font-size: 14px;
  line-height: 20px;
  border-radius: 0 0 3px 3px;
}

.big {
  width: 44px;
  display: flex;
  flex-direction: column;
  align-items: center;
  line-height: 18px;
  white-space: nowrap;
}
.big-ico {
  height: 47px;
  display: flex;
  align-items: flex-end;
  justify-content: center;
  padding-bottom: 3px;
  flex: none;
}
.big-gsd { width: 52px; line-height: 19px; }
.big-gsd .big-ico { height: 46px; }
.lat-gsd { font-size: 13px; }
.i-new { width: 32px; height: 36px; }
.i-save { width: 33px; height: 34px; margin-bottom: 3px; }
.i-arrow { width: 36px; height: 40px; }

.caret {
  margin-top: 5px;
  border: 5.500px solid transparent;
  border-top: 6px solid #555;
  border-bottom: 0;
}
.caret-s {
  margin-left: 6px;
  border: 3.500px solid transparent;
  border-top: 4px solid #555;
  border-bottom: 0;
}

.col { display: flex; flex-direction: column; }
.c-54 { width: 54px; }
.small {
  height: 26px;
  display: flex;
  align-items: center;
  gap: 4px;
  white-space: nowrap;
}
.small svg { width: 20px; height: 20px; flex: none; }
.off { color: #9a9c9e; }
.off svg { opacity: .4; }

/* main area */
.main {
  flex: 1;
  min-height: 0;
  display: flex;
  gap: 5px;
  padding-top: 3px;
  border-top: 1px solid #9a9c9e;
}

.left {
  width: 290px;
  flex: none;
  display: flex;
  flex-direction: column;
  background: #fff;
  border-left: 1px solid #a0a0a0;
}
.pane-head {
  height: 27px;
  flex: none;
  display: flex;
  align-items: center;
  justify-content: space-between;
  padding: 0 5px 0 3px;
  background: #9a9c9a;
  color: #505050;
}
.pin { width: 12px; height: 14px; }
.pane-icons {
  height: 32px;
  flex: none;
  display: flex;
  align-items: center;
  gap: 10.500px;
  padding-left: 7px;
  background: linear-gradient(#cdd0d4, #aaadb2);
}
.pane-icons svg { width: 18px; height: 18px; }
.pane-icons svg.wide { width: 20px; }

/* tree */
.tree {
  flex: 1;
  min-height: 0;
  overflow: hidden;
  font-size: 12px;
  padding-top: 1px;
}
.node {
  height: 18px;
  display: flex;
  align-items: center;
  padding-left: 26px;
  background: repeating-linear-gradient(to right, #777 0 1px, transparent 1px 2px) 30px center / 15px 1px no-repeat;
}
.root {
  padding-left: 4px;
  background-position: 8px center;
}
.sel { background-color: #ededed; }
.exp {
  width: 9px;
  height: 9px;
  flex: none;
  margin-right: 9px;
  border: 1px solid #777;
  background:
    linear-gradient(#111, #111) center / 5px 1px no-repeat,
    linear-gradient(#111, #111) center / 1px 5px no-repeat,
    #fff;
}
.exp.minus {
  background:
    linear-gradient(#111, #111) center / 5px 1px no-repeat,
    #fff;
}
.exp.none { border: 0; background: none; }
.ico { width: 16px; height: 16px; flex: none; margin-right: 5px; }
.lat { font-size: 13px; }
.nowrap { white-space: nowrap; }
.kids {
  background: repeating-linear-gradient(to bottom, #777 0 1px, transparent 1px 2px) 30px 0 / 1px calc(100% - 9px) no-repeat;
}
.kids-root {
  background:
    repeating-linear-gradient(to bottom, #777 0 1px, transparent 1px 2px) 30px 0 / 1px calc(100% - 9px) no-repeat,
    repeating-linear-gradient(to bottom, #777 0 1px, transparent 1px 2px) 8px 0 / 1px 100% no-repeat;
}

/* scrollbars */
.hbar {
  display: flex;
  flex: none;
  background: #efefef;
  align-items: stretch;
}
.hbtn {
  width: 21px;
  text-align: center;
  font-size: 22px;
  line-height: 17px;
  font-weight: bold;
  color: #444;
}
.thumb { background: #cbcbcb; }
.track { flex: 1; }
.hbar-left { height: 21px; margin-bottom: 2px; border-top: 1px solid #fff; }
.hbar-left .thumb { width: 226px; }
.hbar-code { height: 20px; border-bottom: 2px solid #fff; }
.hbar-code .thumb { width: 759px; }

/* right side */
.right {
  flex: 1;
  min-width: 0;
  display: flex;
  flex-direction: column;
}
.tool-area {
  height: 61px;
  flex: none;
  background: linear-gradient(#c6c8ca 0, #c2c4c6 30%, #abaeb3 55%, #c4c6ca 100%);
  border-top: 1px solid #8a8a8a;
}
.toolbar {
  height: 31px;
  display: flex;
  align-items: center;
  padding-left: 3px;
  white-space: nowrap;
  overflow: hidden;
}
.tb {
  width: 28px;
  flex: none;
  display: flex;
  justify-content: center;
}
.tb svg { width: 20px; height: 20px; }
.tb-go { width: 26px; }
.tb-tag {
  width: 42px;
  align-items: center;
  justify-content: flex-start;
  padding-left: 4px;
}
.tb-tag .caret-s { margin-left: 7px; }
.tb-text {
  display: flex;
  align-items: center;
  flex: none;
  width: 76px;
}
.tb-text svg { width: 22px; height: 24px; margin-right: 2px; flex: none; }
.tb-text .caret-s { margin-left: 11px; }
.tb-lad { width: 79px; }
.tb-lad svg { width: 22px; height: 20px; margin-right: 1px; }
.sep {
  width: 1px;
  height: 20px;
  flex: none;
  background: #333;
  margin: 0 4px;
}
.sep-n { margin: 0 3px; }
.sep + .tb-text { margin-left: 5px; }
.tb-text + .sep { margin-left: 0; }
.tb-lad + .sep { margin: 0 2px 0 -6px; }

.doc-tabs {
  height: 29px;
  display: flex;
  align-items: flex-end;
  padding-left: 6px;
}
.doc-back {
  align-self: center;
  width: 0;
  height: 0;
  margin-right: 10px;
  border: 5px solid transparent;
  border-right: 7px solid #8a8a8a;
  border-left: 0;
}
.doc-tab {
  height: 28px;
  display: flex;
  align-items: center;
  justify-content: center;
  font-size: 12.500px;
  border: 1px solid #9a9c9e;
  border-bottom: 0;
}
.t-main {
  width: 112px;
  padding-left: 28px;
  gap: 14px;
  font-size: 14px;
  background: linear-gradient(#edfcff 50%, #c2d0ee 50%);
  clip-path: polygon(24px 0, 100% 0, 100% 100%, 0 100%);
}
.doc-x { color: #555; font-size: 15px; }
.t-sbr {
  width: 66px;
  background: linear-gradient(#ffffa8 50%, #ffd486 100%);
}
.t-int {
  width: 63px;
  background: linear-gradient(#ffc2cc, #f0a0a4);
}

.editor {
  flex: 1;
  min-height: 0;
  display: flex;
  flex-direction: column;
  border-left: 4px solid #dfe6f3;
  border-bottom: 1px solid #b8c4da;
  background: #fff;
}
.code-wrap {
  flex: 1;
  min-height: 0;
  display: flex;
}
.gutter {
  width: 27px;
  flex: none;
  text-align: center;
  font-size: 13px;
  padding: 2px 7px 0 0;
  background: repeating-conic-gradient(#c4c4c4 0 25%, #fff 0 50%) 0 0 / 2px 2px;
  border-right: 2px solid #fff;
}
.code {
  flex: 1;
  min-width: 0;
  border-left: 2px solid #000;
  padding-left: 4px;
  font-size: 13px;
  line-height: 21px;
  letter-spacing: .13px;
}
.net-comment {
  height: 28px;
  padding-top: 2px;
  color: #008000;
  font-size: 12px;
  letter-spacing: 0;
}
.ladder { display: flex; margin-left: -4px; height: 341px; }
.lad-in { width: 204px; flex: none; }
.contact-label {
  height: 20px;
  width: 100px;
  text-align: center;
}
.rung {
  height: 21px;
  display: flex;
  padding-left: 30px;
  gap: 35px;
  background: linear-gradient(to right, #000 0 31px, transparent 31px 67px, #000 67px) 0 center / 100% 2px no-repeat;
  align-items: center;
}
.bar { width: 2px; height: 21px; background: #000; }
.pin-blank { height: 21px; }
.pin-in {
  height: 21px;
  text-align: right;
  padding-right: 7px;
  background: linear-gradient(#000, #000) right center / 5px 2px no-repeat;
}
.fb {
  width: 92px;
  height: 291px;
  flex: none;
  border: 2px solid #000;
  padding-left: 1px;
}
.fb-title { height: 18px; text-align: center; }
.fb-row {
  height: 21px;
  display: flex;
  justify-content: space-between;
  padding-right: 1px;
  white-space: nowrap;
}
.lad-out { padding-top: 62px; }
.pin-out {
  height: 21px;
  padding-left: 6px;
  background: linear-gradient(#000, #000) left center / 5px 2px no-repeat;
}

/* symbol table */
.sym {
  width: 840px;
  table-layout: fixed;
  border-collapse: collapse;
  font-size: 13px;
}
.sym th, .sym td {
  border: 1px solid #808080;
  padding: 0 0 0 4px;
  height: 18px;
  line-height: 15px;
  text-align: left;
  font-weight: normal;
}
.sym th {
  height: 20px;
  font-size: 12px;
  padding-top: 3px;
  background: linear-gradient(#dcdcdc, #808080);
}
.sym th:nth-child(1) { width: 125px; }
.sym th:nth-child(2) { width: 100px; }
.sym .cm { color: #008000; font-size: 12px; padding-top: 2px; letter-spacing: 0; }

/* docks */
.docks {
  height: 37px;
  margin-top: 7px;
  flex: none;
  display: flex;
  gap: 4px;
}
.dock {
  border: 1px solid #e4e4e4;
  background: #d2d4d4;
  padding-bottom: 7px;
}
.d-left { width: 812px; }
.d-right { flex: 1; border-right: 0; }
.dock-head {
  height: 100%;
  display: flex;
  align-items: center;
  gap: 6px;
  padding: 0 4px 3px 3px;
  background: #9a9c9a;
  color: #555;
  white-space: nowrap;
}
.dock-head span:first-child { flex: 1; }
.dock-x { font-size: 15px; color: #555; }

.bottom-tabs {
  height: 30px;
  flex: none;
  display: flex;
  justify-content: space-between;
}
.bt-group { display: flex; align-items: flex-start; padding-left: 3px; }
.bt-right { padding: 0 1px 0 0; }
.bt {
  height: 26px;
  display: flex;
  align-items: center;
  gap: 4px;
  padding: 0 8px 0 3px;
  color: #eee;
  white-space: nowrap;
}
.bt svg { width: 17px; height: 17px; flex: none; }
.bt.active {
  color: #111;
  border: 1px solid #c8e4e8;
  border-top: 0;
  border-radius: 0 0 3px 3px;
  background: linear-gradient(#dbe6e8, #f2f6f6);
  padding: 0 5px 0 2px;
  margin: 0 5px;
}
.bt-last { margin-left: 6px; }

/* status */
.status {
  height: 29px;
  flex: none;
  display: flex;
  align-items: center;
  color: #e4e4e4;
  font-size: 13.500px;
  background: linear-gradient(#3f434d 0 6px, #333 6px);
  white-space: nowrap;
}
.st {
  height: 100%;
  display: flex;
  align-items: center;
  padding-bottom: 2px;
  border-right: 1px solid #5a5a5a;
}
.st-pos { width: 267px; padding-left: 9px; }
.st-ins { width: 43px; padding-left: 10px; font-size: 13px; }
.st-conn { width: 307px; padding-left: 8px; }
.st-e1 { width: 55px; }
.st-e2 { border: 0; }
.led {
  width: 17px;
  height: 18px;
  border-radius: 50%;
  background: #8c8c8c;
  margin-right: 17px;
}
.st-mark {
  margin-left: auto;
  margin-right: 15px;
  padding-bottom: 2px;
  color: #a8a8a8;
  font-size: 13px;
}
```
